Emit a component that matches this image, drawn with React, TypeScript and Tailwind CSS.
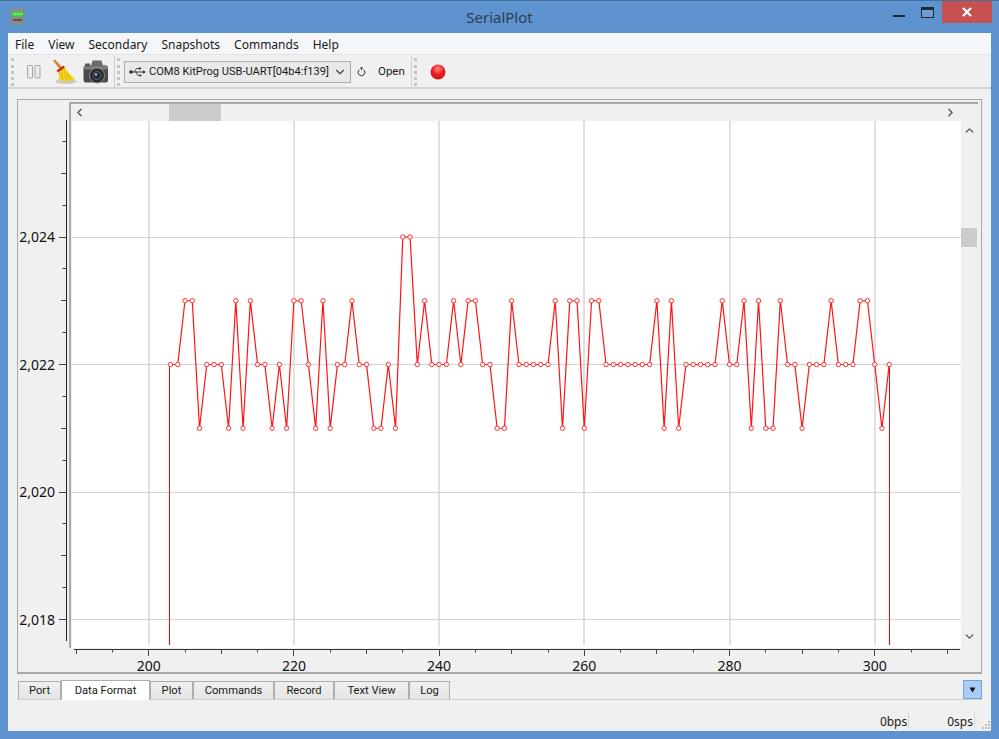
import { ChevronDown, ChevronLeft, ChevronRight, ChevronUp } from "lucide-react";

const samples = [
  2, 2, 3, 3, 1, 2, 2, 2, 1, 3, 1, 3, 2, 2, 1, 2, 1, 3, 3, 2, 1, 3, 1, 2, 2, 3, 2, 2, 1, 1, 2, 1, 4, 4, 2, 3, 2, 2,
  2, 3, 2, 3, 3, 2, 2, 1, 1, 3, 2, 2, 2, 2, 2, 3, 1, 3, 3, 1, 3, 3, 2, 2, 2, 2, 2, 2, 2, 3, 1, 3, 1, 2, 2, 2, 2, 2,
  3, 2, 2, 3, 1, 3, 1, 1, 3, 2, 2, 1, 2, 2, 2, 3, 2, 2, 2, 3, 3, 2, 1, 2,
];

const xOf = (v: number) => 148.7 + (v - 200) * 7.26;
const yOf = (v: number) => 364.5 - (v - 2) * 63.75;

const points = samples.map((s, i) => ({ x: xOf(203 + i), y: yOf(s) }));
const polyline = points.map((p) => `${p.x},${p.y}`).join(" ");

const menus = [
  { label: "File", cls: "ml-[7px]" },
  { label: "View", cls: "ml-[14px]" },
  { label: "Secondary", cls: "ml-[14px]" },
  { label: "Snapshots", cls: "ml-[14px]" },
  { label: "Commands", cls: "ml-[14px]" },
  { label: "Help", cls: "ml-[14px]" },
];

const tabs = [
  { label: "Port", cls: "w-[43px]" },
  { label: "Data Format", cls: "w-[89px]", active: true },
  { label: "Plot", cls: "w-[43px]" },
  { label: "Commands", cls: "w-[81px]" },
  { label: "Record", cls: "w-[60px]" },
  { label: "Text View", cls: "w-[75px]" },
  { label: "Log", cls: "w-[41px]" },
];

function AppIcon() {
  return (
    <svg width="15" height="17" viewBox="0 0 15 17">
      <rect x="0.5" y="0.5" width="14" height="16" rx="3" fill="#8a8a86" />
      <rect x="2" y="3.5" width="11" height="5" fill="#3fd43a" />
      <rect x="4" y="5" width="1.5" height="2" fill="#a6e89c" />
      <rect x="7" y="5" width="1.5" height="2" fill="#a6e89c" />
      <rect x="10" y="5" width="1.5" height="2" fill="#a6e89c" />
      <rect x="3" y="11" width="9" height="2" fill="#55585a" />
    </svg>
  );
}

function PauseIcon() {
  return (
    <svg width="15" height="14" viewBox="0 0 15 14">
      <rect x="0.5" y="0.5" width="5" height="12.5" rx="1" fill="#ececec" stroke="#a2a2a2" />
      <rect x="8" y="0.5" width="5" height="12.5" rx="1" fill="#ececec" stroke="#a2a2a2" />
    </svg>
  );
}

function BroomIcon() {
  return (
    <svg width="26" height="26" viewBox="0 0 26 26">
      <ellipse cx="15" cy="22.5" rx="10.5" ry="2.5" fill="#c9c9c9" />
      <path d="M2 1.5 L4 0.5 L11 8 L8.5 10 Z" fill="#c98a2a" />
      <path d="M7 12 C9 9 11 8 13 7 C16 12 20 17 24.5 20.5 C19 22.5 12 22.5 7.5 21 C8.5 18 8 15 7 12 Z" fill="#f2d21f" />
      <path d="M10 14 L12 21 M13 12 L16 21.5 M16 14 L20 21" stroke="#d9ac12" strokeWidth="0.8" fill="none" />
      <path d="M5.5 11.5 L12.5 6.5 L14 8.5 L7 13.5 Z" fill="#cc2b22" />
    </svg>
  );
}

function CameraIcon() {
  return (
    <svg width="26" height="24" viewBox="0 0 26 24">
      <path d="M8 6 L9.5 0.5 L18.5 0.5 L20 6 Z" fill="#6a6a6a" />
      <rect x="0.5" y="5.5" width="24.5" height="17" rx="2.5" fill="#4a4a4a" />
      <rect x="0.5" y="5.5" width="24.5" height="4" rx="2" fill="#7b7b7b" />
      <rect x="2" y="3.5" width="5" height="3" fill="#5a5a5a" />
      <circle cx="14" cy="15.5" r="7.5" fill="#2a2a2a" stroke="#8e8e8e" />
      <circle cx="14" cy="15.5" r="4" fill="#1c2a3a" stroke="#777" strokeWidth="0.7" />
      <circle cx="13" cy="14.5" r="1.3" fill="#9fc0e0" />
    </svg>
  );
}

function UsbIcon() {
  return (
    <svg width="17" height="10" viewBox="0 0 17 10">
      <circle cx="2" cy="5" r="1.8" fill="#333" />
      <path d="M2 5 H14" stroke="#333" strokeWidth="1" />
      <path d="M14 3.2 L17 5 L14 6.8 Z" fill="#333" />
      <path d="M5 5 L7.5 1.5 H10 M7 5 L9 8.5 H11" stroke="#333" strokeWidth="0.9" fill="none" />
      <rect x="10" y="0.5" width="2" height="2" fill="#333" />
      <circle cx="11.5" cy="8.5" r="1" fill="#333" />
    </svg>
  );
}

function RefreshIcon() {
  return (
    <svg width="9" height="10" viewBox="0 0 9 10">
      <path d="M2.2 2.8 A3.4 3.4 0 1 0 6.8 2.8" stroke="#333" strokeWidth="1" fill="none" />
      <path d="M4.5 0.5 V3 M3.2 1 H6" stroke="#333" strokeWidth="1" fill="none" />
    </svg>
  );
}

function RecordIcon() {
  return (
    <svg width="16" height="16" viewBox="0 0 16 16">
      <defs>
        <radialGradient id="rec" cx="50%" cy="30%" r="70%">
          <stop offset="0%" stopColor="#ff8a8a" />
          <stop offset="55%" stopColor="#ee1c1c" />
          <stop offset="100%" stopColor="#c81818" />
        </radialGradient>
      </defs>
      <circle cx="8" cy="8" r="7.5" fill="url(#rec)" />
    </svg>
  );
}

function Grip() {
  return <div className="w-[3px] h-[28px] border-l-[3px] border-dotted border-[#c4c4c4]" />;
}

function YAxis() {
  const ticks = [];
  for (let i = -15; i <= 15; i++) {
    const v = 2 + i * 0.5;
    const y = Math.floor(yOf(v)) + 0.5;
    if (y < 125 || y > 641) continue;
    const major = i % 4 === 0;
    const medium = i % 2 === 0;
    ticks.push(<line key={i} x1={major ? 59 : medium ? 61 : 62.5} x2={66} y1={y} y2={y} stroke="#444" strokeWidth="1" />);
  }
  return (
    <svg className="w-[51px] h-[546px] shrink-0" viewBox="18 102 51 546">
      <line x1="66.5" x2="66.5" y1="120" y2="641" stroke="#222" strokeWidth="1" />
      {ticks}
      {["2,024", "2,022", "2,020", "2,018"].map((t, i) => (
        <text key={t} x="55" y={yOf(4 - i * 2) + 5} textAnchor="end" fontSize="14" fill="#111" fontFamily="'Noto Sans', sans-serif">
          {t}
        </text>
      ))}
    </svg>
  );
}

function Plot() {
  return (
    <svg className="w-[889px] h-[527px] bg-white shrink-0" viewBox="72 121 889 527">
      {[200, 220, 240, 260, 280, 300].map((v) => (
        <line key={v} x1={Math.round(xOf(v))} x2={Math.round(xOf(v))} y1="121" y2="645" stroke="#e0e0e0" strokeWidth="2" />
      ))}
      {[4, 2, 0, -2].map((v) => (
        <line key={v} x1="72" x2="961" y1={Math.floor(yOf(v)) + 0.5} y2={Math.floor(yOf(v)) + 0.5} stroke="#d4d4d4" strokeWidth="1.2" />
      ))}
      <line x1="169.5" x2="169.5" y1={points[0].y} y2="645" stroke="#ff0000" strokeWidth="1" />
      <line x1="889.5" x2="889.5" y1={points[99].y} y2="645" stroke="#ff0000" strokeWidth="1" />
      <polyline points={polyline} fill="none" stroke="#ff1414" strokeWidth="1.2" />
      {points.map((p, i) => (
        <circle key={i} cx={p.x} cy={p.y} r="2.2" fill="#fff" stroke="#ff3030" strokeWidth="1" />
      ))}
    </svg>
  );
}

function XAxis() {
  const ticks = [];
  for (let v = 190; v <= 310; v += 5) {
    const major = v % 20 === 0;
    const medium = v % 10 === 0;
    const x = Math.floor(xOf(v)) + 0.5;
    ticks.push(<line key={v} x1={x} x2={x} y1="649" y2={major ? 656 : medium ? 654 : 652.5} stroke="#444" strokeWidth="1" />);
  }
  return (
    <svg className="w-[963px] h-[24px] shrink-0 overflow-visible" viewBox="18 648 963 24">
      <line x1="74" x2="960" y1="649.5" y2="649.5" stroke="#333" strokeWidth="1" />
      {ticks}
      {[200, 220, 240, 260, 280, 300].map((v) => (
        <text key={v} x={xOf(v)} y="671" textAnchor="middle" fontSize="14" fill="#111" fontFamily="'Noto Sans', sans-serif">
          {v}
        </text>
      ))}
    </svg>
  );
}

export default function App() {
  return (
    <div className="w-[999px] h-[739px] flex flex-col overflow-hidden bg-[#5f93cf] border-t border-[#41719f] font-['Noto_Sans',sans-serif] text-[#1a1a1a]">
      {/* title bar */}
      <div className="h-[32px] flex items-start shrink-0 relative">
        <div className="ml-[10px] mt-[7px]">
          <AppIcon />
        </div>
        <div className="absolute left-0 right-0 top-[6px] text-center text-[15px] leading-[20px] text-[#2c3e50]">SerialPlot</div>
        <div className="ml-auto flex items-start mr-[7px]">
          <div className="mt-[14px] w-[12px] h-[2px] bg-[#1f2a38]" />
          <div className="ml-[16px] mt-[6px] w-[13px] h-[11px] border border-[#1f2a38] border-t-[3px] bg-[#6d9dd4]" />
          <div className="ml-[8px] w-[50px] h-[22px] bg-[#c75050] flex items-center justify-center">
            <svg width="10" height="10" viewBox="0 0 10 10">
              <path d="M1 1 L9 9 M9 1 L1 9" stroke="#fff" strokeWidth="2.2" />
            </svg>
          </div>
        </div>
      </div>

      <div className="flex-1 mx-[8px] mb-[8px] flex flex-col bg-[#f0f0f0] min-h-0">
        {/* menu */}
        <div className="h-[22px] pt-[3px] flex items-center bg-[#f5f6f7] border-b border-[#e4e4e4] text-[12px] shrink-0">
          {menus.map((m) => (
            <span key={m.label} className={m.cls}>
              {m.label}
            </span>
          ))}
        </div>

        {/* toolbar */}
        <div className="h-[34px] pt-[2px] flex items-center border-b-2 border-[#d4d4d4] shrink-0">
          <div className="ml-[3px]">
            <Grip />
          </div>
          <div className="ml-[13px]">
            <PauseIcon />
          </div>
          <div className="ml-[9px]">
            <BroomIcon />
          </div>
          <div className="ml-[6px]">
            <CameraIcon />
          </div>
          <div className="ml-[5px] w-px h-[32px] bg-[#d0d0d0]" />
          <div className="ml-[2px]">
            <Grip />
          </div>
          <div className="ml-[4px] w-[227px] h-[22px] flex items-center bg-[#e9e9e9] border border-[#adadad] font-['Roboto',sans-serif] text-[11.1px]">
            <div className="ml-[4px]">
              <UsbIcon />
            </div>
            <span className="ml-[3px] whitespace-nowrap">COM8 KitProg USB-UART[04b4:f139]</span>
            <ChevronDown className="ml-auto mr-[3px] text-[#444]" size={14} />
          </div>
          <div className="ml-[6px]">
            <RefreshIcon />
          </div>
          <span className="ml-[12px] w-[26px] font-['Roboto',sans-serif] text-[11.5px]">Open</span>
          <div className="ml-[7px] w-px h-[32px] bg-[#d0d0d0]" />
          <div className="ml-[2px]">
            <Grip />
          </div>
          <div className="ml-[13px]">
            <RecordIcon />
          </div>
        </div>

        {/* plot frame */}
        <div className="ml-[9px] mt-[10px] w-[965px] h-[575px] border border-[#a8a8a8] border-b-2 shrink-0 flex flex-col">
          <div className="flex pt-[2px]">
            <YAxis />
            <div className="w-[909px] border-t-2 border-l-2 border-[#a9a9a9]">
              <div className="h-[17px] flex items-center relative">
                <ChevronLeft className="ml-[2px] text-[#555]" size={13} strokeWidth={2.5} />
                <div className="absolute left-[98px] top-0 w-[52px] h-[17px] bg-[#cbcbcb]" />
                <ChevronRight className="ml-auto mr-[21px] text-[#555]" size={13} strokeWidth={2.5} />
              </div>
              <div className="flex ml-px">
                <Plot />
                <div className="w-[16px] flex flex-col items-center relative">
                  <ChevronUp className="mt-[3px] text-[#555]" size={13} strokeWidth={2.5} />
                  <div className="absolute left-0 top-[107px] w-[16px] h-[19px] bg-[#cbcbcb]" />
                  <ChevronDown className="mt-auto mb-[5px] text-[#555]" size={13} strokeWidth={2.5} />
                </div>
              </div>
            </div>
          </div>
          <XAxis />
        </div>

        {/* tabs */}
        <div className="ml-[9px] mt-[6px] w-[965px] h-[20px] flex items-end border-b border-[#cfcfcf] shrink-0 relative">
          <div className="ml-px flex items-end font-['Roboto',sans-serif] text-[11.2px]">
            {tabs.map((t) => (
              <div
                key={t.label}
                className={`${t.cls} flex items-center justify-center pt-[2px] border border-b-0 border-[#adadad] ${
                  t.active ? "h-[20px] mb-[-1px] bg-white" : "h-[18px] bg-gradient-to-b from-[#f0f0f0] to-[#e4e4e4]"
                }`}
              >
                {t.label}
              </div>
            ))}
          </div>
          <div className="ml-auto w-[19px] h-[19px] flex items-center justify-center bg-[#a9cdf6] border border-[#6fa3e0]">
            <svg width="7" height="6" viewBox="0 0 7 6">
              <path d="M0.5 0.5 H6.5 L3.5 5.5 Z" fill="#111" />
            </svg>
          </div>
        </div>

        {/* status bar */}
        <div className="flex-1 flex items-end justify-end text-[12px] relative">
          <span>0bps</span>
          <div className="ml-px mb-[3px] w-px h-[16px] bg-[#d8d8d8]" />
          <span className="ml-[38px]">0sps</span>
          <div className="ml-px mb-[3px] w-px h-[16px] bg-[#d8d8d8]" />
          <svg className="ml-[6px] mb-px" width="10" height="10" viewBox="0 0 10 10">
            <path d="M7 1 h2 v2 h-2 Z M4 4 h2 v2 h-2 Z M7 4 h2 v2 h-2 Z M1 7 h2 v2 h-2 Z M4 7 h2 v2 h-2 Z M7 7 h2 v2 h-2 Z" fill="#bdbdbd" />
          </svg>
        </div>
      </div>
    </div>
  );
}
